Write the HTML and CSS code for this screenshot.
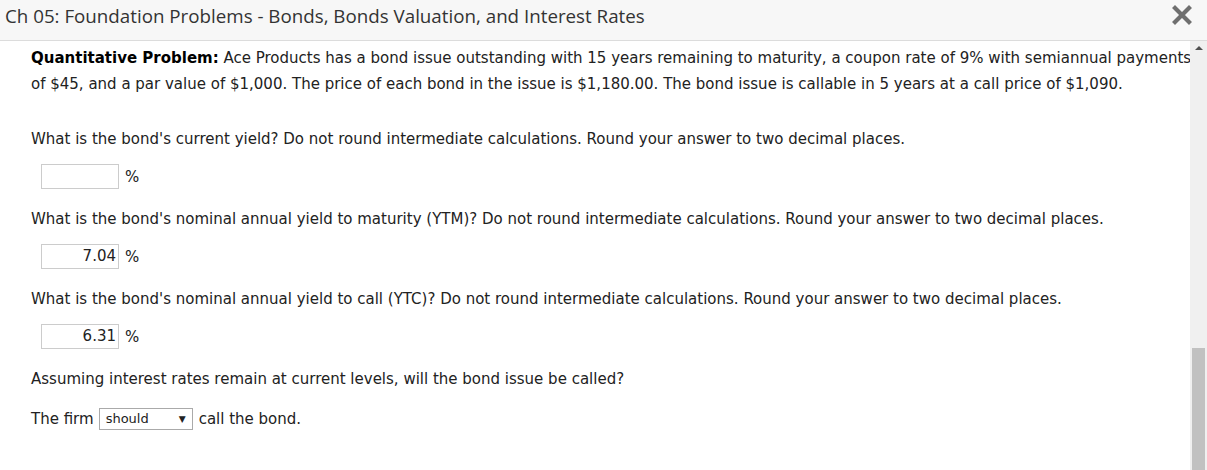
FILE: index.html
```
<!DOCTYPE html>
<html>
<head>
<meta charset="utf-8">
<link rel="stylesheet" href="styles.css">
</head>
<body>
<div class="dialog">
  <div class="header">
    <div class="title">Ch 05: Foundation Problems - Bonds, Bonds Valuation, and Interest Rates</div>
    <svg class="close" width="20" height="20" viewBox="0 0 20 20"><path d="M3 3 L17 17 M17 3 L3 17" stroke="#6f6f6f" stroke-width="4.2" stroke-linecap="square"/></svg>
  </div>
  <div class="body">
    <div class="content">
      <p class="intro"><b>Quantitative Problem:</b> Ace Products has a bond issue outstanding with 15 years remaining to maturity, a coupon rate of 9% with semiannual payments of $45, and a par value of $1,000. The price of each bond in the issue is $1,180.00. The bond issue is callable in 5 years at a call price of $1,090.</p>
      <p class="q q1">What is the bond's current yield? Do not round intermediate calculations. Round your answer to two decimal places.</p>
      <div class="ans"><span class="box"></span><span class="pct">%</span></div>
      <p class="q">What is the bond's nominal annual yield to maturity (YTM)? Do not round intermediate calculations. Round your answer to two decimal places.</p>
      <div class="ans"><span class="box">7.04</span><span class="pct">%</span></div>
      <p class="q">What is the bond's nominal annual yield to call (YTC)? Do not round intermediate calculations. Round your answer to two decimal places.</p>
      <div class="ans"><span class="box">6.31</span><span class="pct">%</span></div>
      <p class="q">Assuming interest rates remain at current levels, will the bond issue be called?</p>
      <div class="firm">The firm <span class="select"><span>should</span><span class="arrow">&#9660;</span></span> call the bond.</div>
    </div>
    <div class="scrollbar">
      <div class="up"></div>
      <div class="thumb"></div>
    </div>
  </div>
</div>
</body>
</html>
```
FILE: styles.css
```
html, body { margin: 0; padding: 0; }
body { width: 1207px; height: 470px; overflow: hidden; background: #fff; }
.dialog { display: flex; flex-direction: column; height: 470px; }
.header {
  height: 41px; box-sizing: border-box; background: #f7f7f7;
  border-bottom: 1px solid #dcdcdc;
  display: flex; align-items: flex-start; justify-content: space-between;
  padding: 0 15px 0 5px; flex: none;
}
.title {
  font-family: "Open Sans", sans-serif; font-size: 18.75px; color: #333;
  line-height: 22px; padding-top: 5px;
}
.close { margin-top: 5px; }
.body { flex: 1; display: flex; overflow: hidden; }
.content {
  flex: 1; overflow: hidden; min-width: 0;
  padding: 4px 0 0 31px;
  font-family: "DejaVu Sans", Verdana, sans-serif; font-size: 15px; color: #222;
}
.content p { margin: 0; }
.intro { line-height: 26px; width: 1175px; }
.intro b { color: #000; }
.q { line-height: 20px; margin-top: 20px !important; }
.q1 { margin-top: 32px !important; }
.ans { display: flex; align-items: center; margin: 15px 0 0 10px; height: 25px; }
.box {
  width: 78px; height: 25px; box-sizing: border-box; border: 1px solid #ccc;
  text-align: right; padding: 0 2px; line-height: 23px;
}
.pct { margin-left: 6px; }
.firm { margin-top: 19px; display: flex; align-items: center; height: 22px; }
.select {
  display: inline-flex; align-items: center; justify-content: space-between;
  width: 94px; height: 22px; box-sizing: border-box; border: 1px solid #aaa;
  margin: 0 6px 0 5px; padding: 0 6px 0 6px; font-size: 13px; line-height: 20px;
}
.arrow { font-size: 9px; }
.scrollbar {
  width: 17px; flex: none; background: #f0f0f0; position: relative;
}
.up {
  width: 0; height: 0; margin: 5px auto 0; border-left: 4px solid transparent;
  border-right: 4px solid transparent; border-bottom: 4px solid #505050;
}
.thumb { position: absolute; left: 2px; right: 2px; top: 307px; bottom: 0; background: #c1c1c1; }
```
